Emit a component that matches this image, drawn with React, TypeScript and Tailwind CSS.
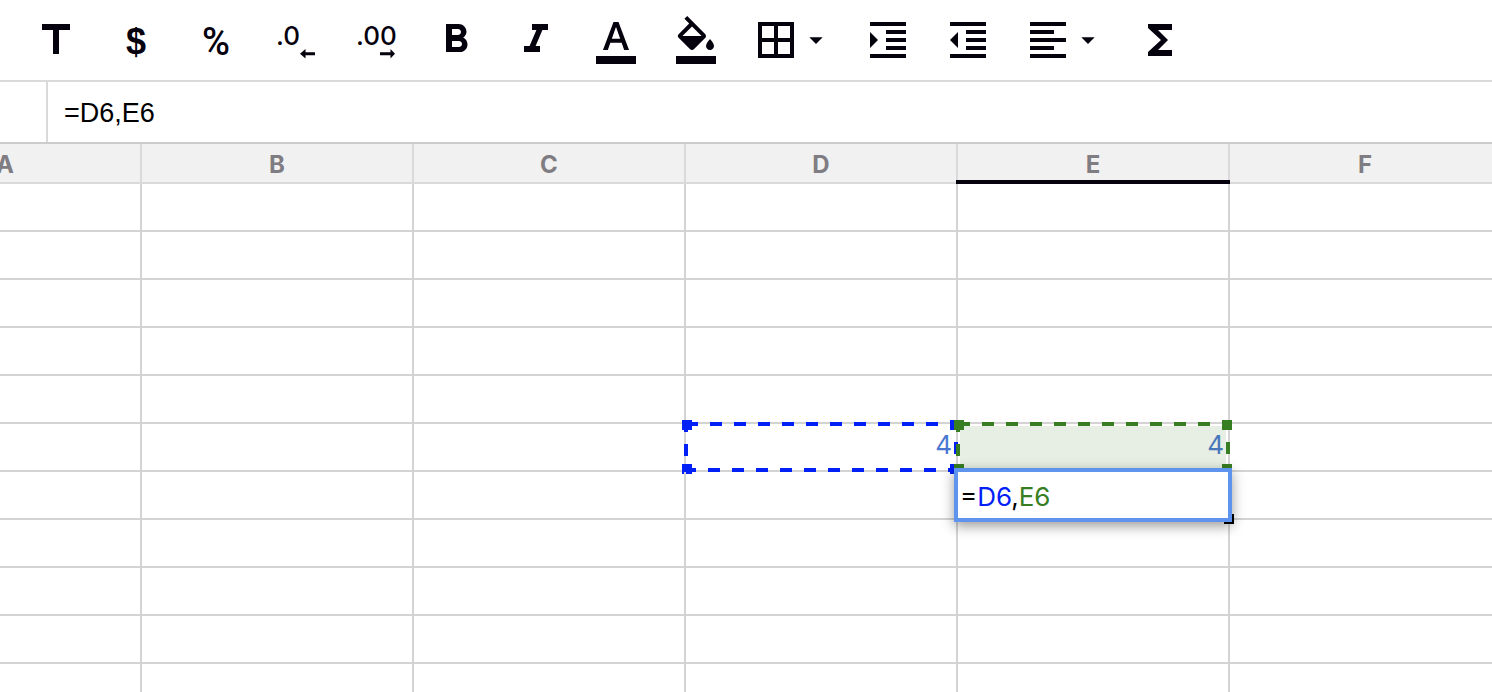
import React from "react";
import {
  MdArrowDropDown,
  MdBorderAll,
  MdFormatAlignLeft,
  MdFormatBold,
  MdFormatColorFill,
  MdFormatColorText,
  MdFormatIndentDecrease,
  MdFormatIndentIncrease,
  MdFormatItalic,
  MdFunctions,
  MdTitle,
} from "react-icons/md";

const COLUMNS = ["A", "B", "C", "D", "E", "F"];
const ROWS = Array.from({ length: 11 }, (_, i) => i + 1);
const ACTIVE_COLUMN = "E";
const EDITING_CELL = "E7";

const VALUES: Record<string, string> = { D6: "4", E6: "4" };

type RangeStyle = {
  color: string;
  filled: boolean;
};

const RANGES: Record<string, RangeStyle> = {
  D6: { color: "#0020f5", filled: false },
  E6: { color: "#377e22", filled: true },
};

type ToolButtonProps = {
  label: string;
  dropdown?: boolean;
  children: React.ReactNode;
};

const ToolButton: React.FC<ToolButtonProps> = ({
  label,
  dropdown,
  children,
}) => (
  <button
    type="button"
    aria-label={label}
    className="flex h-12 shrink-0 items-center"
  >
    <span className="flex size-12 items-center justify-center">{children}</span>
    {dropdown && <MdArrowDropDown className="size-8" />}
  </button>
);

type DecimalLabelProps = {
  text: string;
  direction: "left" | "right";
};

const DecimalLabel: React.FC<DecimalLabelProps> = ({ text, direction }) => (
  <span className="flex size-12 flex-col px-1 pt-2">
    <span className="text-left font-['Inter',sans-serif] text-[26px] leading-6 font-medium">
      {text}
    </span>
    <svg viewBox="0 0 16 12" className="h-3 w-4 self-end" fill="currentColor">
      {direction === "left" ? (
        <path d="M0 5.8 5.5 1v3.3H15v3H5.5v3.3z" />
      ) : (
        <path d="M15 5.8 10.5 1v3.3H0v3h10.5v3.3z" />
      )}
    </svg>
  </span>
);

const Toolbar: React.FC = () => (
  <div
    role="toolbar"
    className="flex h-[82px] shrink-0 items-center gap-8 overflow-hidden border-b-2 border-[#dadada] px-8 text-[#05010d]"
  >
    <ToolButton label="Font">
      <MdTitle className="size-12" />
    </ToolButton>
    <ToolButton label="Format as currency">
      <span className="pt-1 font-['Liberation_Sans',Arial,sans-serif] text-4xl font-bold">
        $
      </span>
    </ToolButton>
    <ToolButton label="Format as percent">
      <span className="pt-1 font-['Roboto',sans-serif] text-[38px] leading-10 font-medium">
        %
      </span>
    </ToolButton>
    <ToolButton label="Decrease decimal places">
      <DecimalLabel text=".0" direction="left" />
    </ToolButton>
    <ToolButton label="Increase decimal places">
      <DecimalLabel text=".00" direction="right" />
    </ToolButton>
    <ToolButton label="Bold">
      <MdFormatBold className="size-12" />
    </ToolButton>
    <ToolButton label="Italic">
      <MdFormatItalic className="size-12" />
    </ToolButton>
    <ToolButton label="Text color">
      <MdFormatColorText className="size-12" />
    </ToolButton>
    <ToolButton label="Fill color">
      <MdFormatColorFill className="size-12" />
    </ToolButton>
    <ToolButton label="Borders" dropdown>
      <MdBorderAll className="size-12" />
    </ToolButton>
    <ToolButton label="Increase indent">
      <MdFormatIndentIncrease className="size-12" />
    </ToolButton>
    <ToolButton label="Decrease indent">
      <MdFormatIndentDecrease className="size-12" />
    </ToolButton>
    <ToolButton label="Align" dropdown>
      <MdFormatAlignLeft className="size-12" />
    </ToolButton>
    <ToolButton label="Functions">
      <MdFunctions className="size-12" />
    </ToolButton>
  </div>
);

const FormulaBar: React.FC = () => (
  <div className="flex h-[62px] shrink-0 border-b-2 border-[#cccccc]">
    <div className="w-12 shrink-0 border-r-2 border-[#dadada]" />
    <input
      aria-label="Formula"
      defaultValue="=D6,E6"
      className="min-w-0 flex-1 px-4 pt-0.5 font-['Liberation_Sans',Arial,sans-serif] text-[27px] text-black outline-none"
    />
  </div>
);

const RangeOutline: React.FC<RangeStyle> = ({ color, filled }) => (
  <svg
    viewBox="0 0 278 54"
    className="pointer-events-none absolute -top-1 -left-1 h-[54px] w-[278px] max-w-none"
  >
    {filled && (
      <rect x="6" y="6" width="266" height="42" fill={color} opacity="0.12" />
    )}
    <rect
      x="4"
      y="4"
      width="270"
      height="46"
      fill="none"
      stroke={color}
      strokeWidth="4"
      strokeDasharray="12 12"
    />
    <g fill={color}>
      <rect width="10" height="10" />
      <rect x="268" width="10" height="10" />
      <rect y="44" width="10" height="10" />
      <rect x="268" y="44" width="10" height="10" />
    </g>
  </svg>
);

const CellEditor: React.FC = () => (
  <div className="absolute -top-1 -left-1 z-10 h-[54px] w-[278px]">
    <div className="absolute -right-0.5 -bottom-0.5 size-2.5 bg-black" />
    <div
      role="textbox"
      aria-label="Cell E7"
      contentEditable
      suppressContentEditableWarning
      className="relative h-full border-4 border-[#5e93ee] bg-white px-0.5 pt-0.5 text-left text-[26px] leading-[46px] text-black shadow-[0_4px_12px_rgba(0,0,0,0.4)] outline-none"
    >
      =<span className="text-[#0020f5]">D6</span>,
      <span className="text-[#377e22]">E6</span>
    </div>
  </div>
);

const Sheet: React.FC = () => (
  <div className="min-h-0 flex-1 overflow-hidden">
    <table className="-ml-[130px] w-max table-fixed border-separate border-spacing-0 font-['Inter',sans-serif]">
      <thead>
        <tr>
          {COLUMNS.map((col) => (
            <th
              key={col}
              scope="col"
              className="relative h-10 w-[272px] min-w-[272px] border-r-2 border-b-2 border-[#dadada] bg-[#f1f1f1] p-0 pt-1 text-2xl leading-[34px] font-bold text-[#7f7d82]"
            >
              {col}
              {col === ACTIVE_COLUMN && (
                <div className="absolute -right-0.5 -bottom-0.5 -left-0.5 h-1 bg-[#05010d]" />
              )}
            </th>
          ))}
        </tr>
      </thead>
      <tbody>
        {ROWS.map((row) => (
          <tr key={row}>
            {COLUMNS.map((col) => {
              const id = `${col}${row}`;
              const range = RANGES[id];
              return (
                <td
                  key={id}
                  className="relative h-12 border-r-2 border-b-2 border-[#d3d3d3] p-0 pr-1 text-right align-top text-[26px] leading-[42px] text-[#4a78d0]"
                >
                  {VALUES[id]}
                  {range && <RangeOutline {...range} />}
                  {id === EDITING_CELL && <CellEditor />}
                </td>
              );
            })}
          </tr>
        ))}
      </tbody>
    </table>
  </div>
);

const App: React.FC = () => (
  <div className="flex h-screen flex-col overflow-hidden bg-white">
    <Toolbar />
    <FormulaBar />
    <Sheet />
  </div>
);

export default App;
